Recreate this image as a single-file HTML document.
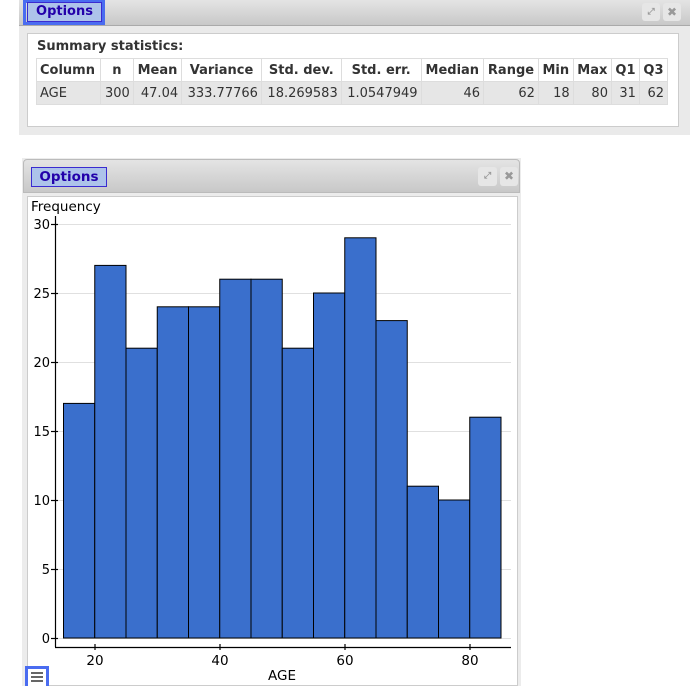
<!DOCTYPE html>
<html><head><meta charset="utf-8"><style>
body{margin:0;width:690px;height:686px;background:#fff;position:relative;overflow:hidden;font-family:"DejaVu Sans","Liberation Sans",sans-serif;}
.abs{position:absolute;}
.hdr{background:linear-gradient(#e4e4e4,#c8c8c8);}
.btn{background:#adc3ea;border:1px solid #3a2bd0;color:#2200aa;font-weight:bold;font-size:13px;text-align:center;box-sizing:border-box;}
.ib{background:#e6e6e6;border-radius:3px;color:#999;font-size:12px;text-align:center;line-height:18px;font-weight:bold;}
table{border-collapse:collapse;font-size:13px;color:#333;}
td,th{border:1px solid #ddd;padding:0 3px;height:22px;white-space:nowrap;}
th{background:#fff;font-weight:bold;}
td{background:#e6e6e6;text-align:right;font-family:"DejaVu Sans",sans-serif;font-size:13px;}
</style></head><body>
<div class="abs" style="left:19px;top:0;width:671px;height:135px;background:#eaeaea;"></div>
<div class="abs hdr" style="left:19px;top:0;width:671px;height:25px;border-bottom:1px solid #aaa;"></div>
<div class="abs" style="left:23px;top:0;width:82px;height:25px;box-sizing:border-box;border:3px solid #4a6cf0;"></div>
<div class="abs btn" style="left:27px;top:2px;width:75px;height:20px;line-height:18px;">Options</div>
<div class="abs ib" style="left:642px;top:3px;width:18px;height:18px;font-size:9px;">⤢</div>
<div class="abs ib" style="left:663px;top:3px;width:18px;height:18px;">✖</div>
<div class="abs" style="left:27px;top:33px;width:652px;height:94px;background:#fff;border:1px solid #ccc;box-sizing:border-box;"></div>
<div class="abs" style="left:37px;top:39px;font-size:13px;font-weight:bold;color:#333;">Summary statistics:</div>
<table class="abs" style="left:36px;top:58px;width:632px;">
<tr><th style="text-align:left">Column</th><th>n</th><th>Mean</th><th>Variance</th><th>Std. dev.</th><th>Std. err.</th><th>Median</th><th>Range</th><th>Min</th><th>Max</th><th>Q1</th><th>Q3</th></tr>
<tr><td style="text-align:left">AGE</td><td>300</td><td>47.04</td><td>333.77766</td><td>18.269583</td><td>1.0547949</td><td>46</td><td>62</td><td>18</td><td>80</td><td>31</td><td>62</td></tr>
</table>
<div class="abs" style="left:22px;top:158px;width:499px;height:528px;background:#ececec;"></div>
<div class="abs hdr" style="left:23px;top:159px;width:497px;height:34px;border:1px solid #bbb;border-radius:4px 4px 0 0;box-sizing:border-box;"></div>
<div class="abs btn" style="left:31px;top:167px;width:76px;height:20px;line-height:18px;font-size:13.5px;">Options</div>
<div class="abs ib" style="left:478px;top:167px;width:19px;height:19px;font-size:9px;">⤢</div>
<div class="abs ib" style="left:500px;top:167px;width:18px;height:19px;">✖</div>
<div class="abs" style="left:27px;top:196px;width:491px;height:490px;background:#fff;border:1px solid #ccc;box-sizing:border-box;"></div>
<svg class="abs" style="left:0;top:0" width="690" height="686" font-family="DejaVu Sans, sans-serif" font-size="13">
<text x="31" y="211" font-size="13.5">Frequency</text>
<g stroke="#e0e0e0" stroke-width="1">
<line x1="55" x2="511" y1="224.5" y2="224.5"/><line x1="55" x2="511" y1="293.5" y2="293.5"/><line x1="55" x2="511" y1="362.5" y2="362.5"/><line x1="55" x2="511" y1="431.5" y2="431.5"/><line x1="55" x2="511" y1="500.5" y2="500.5"/><line x1="55" x2="511" y1="569.5" y2="569.5"/><line x1="55" x2="511" y1="638.5" y2="638.5"/>
</g>
<g fill="#3a6fcc" stroke="#000" stroke-width="1">
<rect x="63.5" y="403.4" width="31.25" height="234.6"/>
<rect x="94.75" y="265.4" width="31.25" height="372.6"/>
<rect x="126" y="348.2" width="31.25" height="289.8"/>
<rect x="157.25" y="306.8" width="31.25" height="331.2"/>
<rect x="188.5" y="306.8" width="31.25" height="331.2"/>
<rect x="219.75" y="279.2" width="31.25" height="358.8"/>
<rect x="251" y="279.2" width="31.25" height="358.8"/>
<rect x="282.25" y="348.2" width="31.25" height="289.8"/>
<rect x="313.5" y="293" width="31.25" height="345"/>
<rect x="344.75" y="237.8" width="31.25" height="400.2"/>
<rect x="376" y="320.6" width="31.25" height="317.4"/>
<rect x="407.25" y="486.2" width="31.25" height="151.8"/>
<rect x="438.5" y="500" width="31.25" height="138"/>
<rect x="469.75" y="417.2" width="31.25" height="220.8"/>
</g>
<g stroke="#000" stroke-width="1.2">
<line x1="55.5" y1="216" x2="55.5" y2="647"/><line x1="55" y1="647.5" x2="511" y2="647.5"/>
<line x1="51" x2="58" y1="224.5" y2="224.5"/><line x1="51" x2="58" y1="293.5" y2="293.5"/><line x1="51" x2="58" y1="362.5" y2="362.5"/><line x1="51" x2="58" y1="431.5" y2="431.5"/><line x1="51" x2="58" y1="500.5" y2="500.5"/><line x1="51" x2="58" y1="569.5" y2="569.5"/><line x1="51" x2="58" y1="638.5" y2="638.5"/>
<line x1="95" x2="95" y1="644" y2="650"/><line x1="220" x2="220" y1="644" y2="650"/><line x1="345" x2="345" y1="644" y2="650"/><line x1="470" x2="470" y1="644" y2="650"/>
</g>
<g text-anchor="end" font-size="13">
<text x="50" y="229">30</text><text x="50" y="298">25</text><text x="50" y="367">20</text><text x="50" y="436">15</text><text x="50" y="505">10</text><text x="50" y="574">5</text><text x="50" y="643">0</text>
</g>
<g text-anchor="middle" font-size="13.5">
<text x="95" y="665">20</text><text x="220" y="665">40</text><text x="345" y="665">60</text><text x="470" y="665">80</text>
<text x="282" y="680">AGE</text>
</g>
<rect x="26.5" y="667.5" width="21" height="20" fill="#fff" stroke="#4a6cf0" stroke-width="3"/>
<g stroke="#666" stroke-width="2"><line x1="31" x2="43" y1="673" y2="673"/><line x1="31" x2="43" y1="677" y2="677"/><line x1="31" x2="43" y1="681" y2="681"/></g>
</svg>
</body></html>
